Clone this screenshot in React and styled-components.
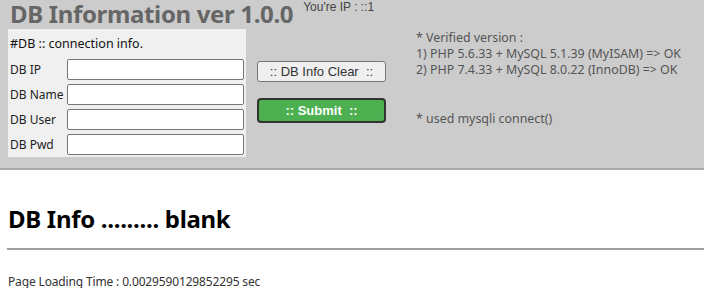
import React from 'react';
import styled, { createGlobalStyle } from 'styled-components';

const GlobalStyle = createGlobalStyle`
  body {
    margin: 0;
    background: #fff;
    font-family: 'Noto Sans', 'Noto Sans CJK KR', sans-serif;
  }
`;

const fields = ['DB IP', 'DB Name', 'DB User', 'DB Pwd'];

const App = () => {
  return (
    <>
      <GlobalStyle />
      <Header>
        <TitleRow>
          <Title>DB Information ver 1.0.0</Title>
          <IpText>You're IP : ::1</IpText>
        </TitleRow>
        <FormRow>
          <InfoTable cellSpacing="0" cellPadding="0">
            <tbody>
              <tr>
                <HeadCell colSpan={2}>#DB :: connection info.</HeadCell>
              </tr>
              {fields.map((f) => (
                <tr key={f}>
                  <LabelCell>{f}</LabelCell>
                  <InputCell>
                    <TextInput type={f === 'DB Pwd' ? 'password' : 'text'} />
                  </InputCell>
                </tr>
              ))}
            </tbody>
          </InfoTable>
          <ButtonBox>
            <ClearButton>:: DB Info Clear&nbsp; ::</ClearButton>
            <SubmitButton>:: Submit&nbsp; ::</SubmitButton>
          </ButtonBox>
          <Notes>
            <NoteLine>* Verified version :</NoteLine>
            <NoteLine>1) PHP 5.6.33 + MySQL 5.1.39 (MyISAM) =&gt; OK</NoteLine>
            <NoteLine>2) PHP 7.4.33 + MySQL 8.0.22 (InnoDB) =&gt; OK</NoteLine>
            <NoteGap />
            <NoteLine>* used mysqli connect()</NoteLine>
          </Notes>
        </FormRow>
      </Header>
      <Content>
        <ResultTitle>DB Info ......... blank</ResultTitle>
        <Divider />
        <LoadTime>Page Loading Time : 0.0029590129852295 sec</LoadTime>
      </Content>
    </>
  );
};

export default App;

const Header = styled.div`
  background-color: #cccccc;
  border-bottom: 2px solid #aaaaaa;
  padding: 0 8px 14px 8px;
  height: 154px;
`;

const TitleRow = styled.div`
  display: flex;
  align-items: flex-start;
  height: 29px;
`;

const Title = styled.div`
  margin-left: 2px;
  font-size: 24px;
  font-weight: 700;
  line-height: 28px;
  letter-spacing: -0.35px;
  color: #666666;
`;

const IpText = styled.div`
  margin-left: 10px;
  margin-top: 1px;
  font-family: 'Liberation Sans', Arial, sans-serif;
  font-size: 12px;
  line-height: 13px;
  color: #444444;
`;

const FormRow = styled.div`
  display: flex;
  align-items: flex-start;
`;

const InfoTable = styled.table`
  background-color: #f0f0f0;
  border-collapse: collapse;
  width: 238px;
`;

const HeadCell = styled.td`
  height: 28px;
  padding: 0 2px;
  font-size: 12.5px;
  color: #111111;
`;

const LabelCell = styled.td`
  height: 25px;
  padding: 0 2px;
  font-size: 12px;
  color: #222222;
  white-space: nowrap;
  width: 55px;
`;

const InputCell = styled.td`
  padding: 0 2px 0 0;
`;

const TextInput = styled.input`
  box-sizing: border-box;
  width: 177px;
  height: 21px;
  margin: 0;
  border: 1px solid #767676;
  border-radius: 2px;
  background: #fff;
  padding: 1px 2px;
  display: block;
`;

const ButtonBox = styled.div`
  display: flex;
  flex-direction: column;
  margin: 32px 0 0 11px;
`;

const ClearButton = styled.button`
  box-sizing: border-box;
  width: 129px;
  height: 21px;
  padding: 0;
  border: 1px solid #767676;
  border-radius: 3px;
  background-color: #efefef;
  font-family: 'Liberation Sans', Arial, sans-serif;
  font-size: 13px;
  color: #333333;
`;

const SubmitButton = styled.button`
  box-sizing: border-box;
  width: 129px;
  height: 25px;
  margin-top: 16px;
  padding: 0;
  border: 2px solid #333333;
  border-radius: 4px;
  background-color: #4caf50;
  font-family: 'Liberation Sans', Arial, sans-serif;
  font-size: 13px;
  font-weight: 700;
  color: #ffffff;
`;

const Notes = styled.div`
  margin: 1px 0 0 30px;
  font-size: 12.4px;
  line-height: 16px;
  color: #555555;
`;

const NoteLine = styled.div``;

const NoteGap = styled.div`
  height: 33px;
`;

const Content = styled.div`
  padding: 0 0 0 8px;
`;

const ResultTitle = styled.h2`
  margin: 34px 0 0 0;
  font-size: 24px;
  font-weight: 700;
  line-height: 30px;
  letter-spacing: -0.3px;
  color: #000000;
`;

const Divider = styled.hr`
  margin: 14px 0 0 -1px;
  border: 0;
  border-top: 2px solid #a0a0a0;
`;

const LoadTime = styled.div`
  margin-top: 24px;
  font-size: 12px;
  line-height: 16px;
  letter-spacing: -0.15px;
  color: #333333;
`;
